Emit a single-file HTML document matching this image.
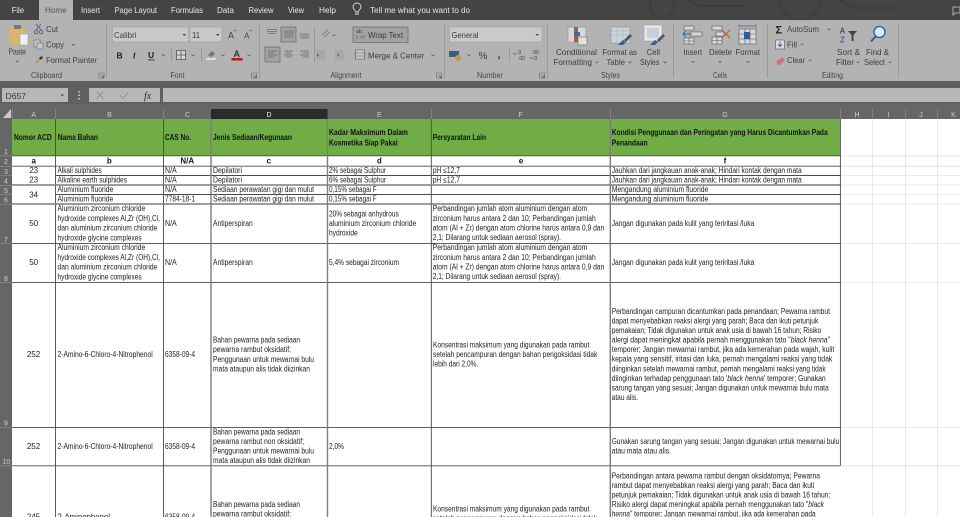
<!DOCTYPE html>
<html><head><meta charset="utf-8"><style>
html,body{margin:0;padding:0;width:960px;height:517px;overflow:hidden;background:#fff}
svg{display:block;filter:blur(.3px)}
text{font-family:"Liberation Sans",sans-serif}
.t{font-size:8.5px;fill:#e8e8e8}
.r{font-size:8.5px;fill:#3c3c3c}
.l{font-size:8px;fill:#444}
.c{font-size:8px;fill:#222}
.b{font-size:8px;fill:#111;font-weight:bold}
.h{font-size:7px;fill:#cfcfcf}
.ch{fill:none;stroke:#555;stroke-width:.7}
</style></head><body>
<svg width="960" height="517" viewBox="0 0 960 517" xmlns="http://www.w3.org/2000/svg">
<defs><path id="cv" class="ch" d="M-1.5 -1 L0 .5 L1.5 -1"/>
<g id="lau"><path d="M-2.5 -2.5h5v5h-5z" fill="none" stroke="#666" stroke-width=".6"/><path d="M-.5 -.5l3 3M2.5 .5v2h-2" fill="none" stroke="#555" stroke-width=".6"/></g></defs>

<!-- title bar -->
<rect width="960" height="20" fill="#444"/>
<g fill="none" stroke="#3c3c3c" stroke-width="1.5"><circle cx="662" cy="6" r="12"/><path d="M690 0l8 6h48M780 0a16 16 0 0 0 40 0M840 0l12 8h50"/></g>
<path d="M953 7h7v6h-5l-2 2z" fill="none" stroke="#ccc" stroke-width=".8"/>
<rect x="39" y="0" width="34" height="20" fill="#b3b3b3"/>
<text class="t" x="11.7" y="13" textLength="12.3" lengthAdjust="spacingAndGlyphs">File</text>
<text class="r" x="45" y="13" textLength="21.7" lengthAdjust="spacingAndGlyphs" style="fill:#555">Home</text>
<text class="t" x="81" y="13" textLength="19" lengthAdjust="spacingAndGlyphs">Insert</text>
<text class="t" x="114.5" y="13" textLength="42.5" lengthAdjust="spacingAndGlyphs">Page Layout</text>
<text class="t" x="171" y="13" textLength="32" lengthAdjust="spacingAndGlyphs">Formulas</text>
<text class="t" x="217" y="13" textLength="17" lengthAdjust="spacingAndGlyphs">Data</text>
<text class="t" x="248.5" y="13" textLength="25" lengthAdjust="spacingAndGlyphs">Review</text>
<text class="t" x="288" y="13" textLength="16" lengthAdjust="spacingAndGlyphs">View</text>
<text class="t" x="319" y="13" textLength="17" lengthAdjust="spacingAndGlyphs">Help</text>
<path d="M355 14h4M355.5 12c0-2-2.500-3-2.500-5a4 4 0 0 1 8 0c0 2-2.500 3-2.500 5z" fill="none" stroke="#ddd" stroke-width=".9"/>
<text class="t" x="370" y="13" textLength="100" lengthAdjust="spacingAndGlyphs">Tell me what you want to do</text>

<!-- ribbon -->
<rect y="20" width="960" height="61" fill="#b3b3b3"/>
<g fill="#9a9a9a"><rect x="106" y="23" width="1" height="55"/><rect x="259" y="23" width="1" height="55"/><rect x="444" y="23" width="1" height="55"/><rect x="547" y="23" width="1" height="55"/><rect x="673" y="23" width="1" height="55"/><rect x="767" y="23" width="1" height="55"/><rect x="898" y="23" width="1" height="55"/><rect x="314" y="27" width="1" height="35"/><rect x="171" y="48" width="1" height="14"/><rect x="201" y="48" width="1" height="14"/><rect x="509" y="48" width="1" height="14"/></g>

<!-- clipboard -->
<rect x="10" y="27" width="15" height="18" rx="1" fill="#d9b56c"/><rect x="14" y="25" width="7" height="4" fill="#777"/><rect x="20" y="34" width="8" height="11" fill="#eee" stroke="#888" stroke-width=".4"/>
<text class="r" x="8.500" y="54.500" textLength="17.500" lengthAdjust="spacingAndGlyphs">Paste</text><use href="#cv" x="17.500" y="61.500"/>
<g fill="none" stroke="#46597a" stroke-width=".8"><circle cx="36" cy="32" r="1.800"/><circle cx="41" cy="32" r="1.800"/><path d="M36 30l5-6M41 30l-5-6"/></g>
<text class="r" x="46" y="32" textLength="12" lengthAdjust="spacingAndGlyphs">Cut</text>
<rect x="34" y="40" width="6" height="7" fill="#c8c8c8" stroke="#667" stroke-width=".6"/><rect x="37" y="43" width="6" height="6" fill="#c8c8c8" stroke="#667" stroke-width=".6"/>
<text class="r" x="46" y="47.500" textLength="18" lengthAdjust="spacingAndGlyphs">Copy</text><use href="#cv" x="73.500" y="45"/>
<path d="M35 62l3-3 2 2-3 3z" fill="#c69a4e"/><path d="M39 58l3-2 1 2-3 2z" fill="#333"/>
<text class="r" x="46" y="63" textLength="51" lengthAdjust="spacingAndGlyphs">Format Painter</text>
<text class="l" x="31" y="78" textLength="31" lengthAdjust="spacingAndGlyphs">Clipboard</text><use href="#lau" x="101.500" y="75.500"/>

<!-- font -->
<rect x="112.500" y="27" width="76" height="15" fill="#c8c8c8" stroke="#a0a0a0" stroke-width=".6"/>
<rect x="190" y="27" width="32" height="15" fill="#c8c8c8" stroke="#a0a0a0" stroke-width=".6"/>
<text class="r" x="114" y="38" textLength="22.500" lengthAdjust="spacingAndGlyphs">Calibri</text>
<text class="r" x="192" y="38" textLength="8" lengthAdjust="spacingAndGlyphs">11</text>
<path d="M182.500 34h3.500l-1.750 2zM216 34h3.500l-1.750 2z" fill="#444"/>
<text class="r" x="228" y="38.500" style="font-size:9px">A</text><text class="r" x="244" y="38.500" style="font-size:8px">A</text>
<path d="M233.500 31l1.500-1 1.500 1M249 30l1.500 1 1.500-1" fill="none" stroke="#3f5f8f" stroke-width=".6"/>
<text class="r" x="116.500" y="58.500" style="font-weight:bold;font-size:8.500px;fill:#222">B</text>
<text class="r" x="133" y="58.500" style="font-weight:bold;font-style:italic;font-size:8.500px;fill:#222">I</text>
<text class="r" x="148" y="58" style="font-weight:bold;font-size:8.500px;fill:#222">U</text><rect x="148" y="59.500" width="6.500" height=".8" fill="#222"/>
<use href="#cv" x="163.500" y="55.500"/>
<path d="M176.500 50.500h9v9h-9zM181 50.500v9M176.500 55h9" fill="#d6d6d6" stroke="#555" stroke-width=".8"/><use href="#cv" x="193" y="55.500"/>
<path d="M208 55l4-4 3 3-4 3z" fill="#777"/><rect x="206" y="58" width="10" height="2" fill="#ddd"/><use href="#cv" x="223" y="55.500"/>
<text class="r" x="233.500" y="57" style="font-size:9px;font-weight:bold;fill:#333">A</text><rect x="231.500" y="58" width="11" height="2.500" fill="#c0141c"/><use href="#cv" x="249" y="55.500"/>
<text class="l" x="170.500" y="78" textLength="14" lengthAdjust="spacingAndGlyphs">Font</text><use href="#lau" x="254" y="75.500"/>

<!-- alignment -->
<rect x="281" y="27" width="15" height="15" fill="#a2a2a2" stroke="#6f6f6f" stroke-width=".8"/>
<rect x="265" y="47" width="15" height="15" fill="#a2a2a2" stroke="#6f6f6f" stroke-width=".8"/>
<g stroke="#6a6a6a" stroke-width=".8" fill="none"><path d="M267 29.500h10M267 31.500h10M268 33.500h8"/><path d="M284 31h10M284 33h10M285 35h8M284 37h10"/><path d="M299.500 34h10M299.500 36h10M300.500 38h8"/><path d="M268 51h9M268 53h6M268 55h9M268 57h6"/><path d="M284 51h9M285.500 53h6M284 55h9M285.500 57h6"/><path d="M300 51h9M303 53h6M300 55h9M303 57h6"/></g>
<path d="M322 35l6-5M324 37l6-5" stroke="#777" stroke-width=".9" fill="none"/><use href="#cv" x="334" y="35.500"/>
<rect x="316" y="50" width="9" height="10" fill="#a8a8a8"/><path d="M319 55l-2-2v4z" fill="#3f6a9c"/>
<rect x="335" y="50" width="9" height="10" fill="#a8a8a8"/><path d="M337 55l2-2v4z" fill="#3f6a9c"/>
<rect x="353" y="27" width="55" height="15.500" fill="#a2a2a2" stroke="#6f6f6f" stroke-width=".8"/>
<text class="r" x="356" y="33" style="font-size:5.500px;fill:#444">ab</text><text class="r" x="356" y="39" style="font-size:5.500px;fill:#3f6a9c">c</text><path d="M360 37h4v-2" stroke="#3f6a9c" fill="none" stroke-width=".7"/>
<text class="r" x="368" y="38" textLength="35" lengthAdjust="spacingAndGlyphs">Wrap Text</text>
<rect x="355.500" y="50" width="9" height="9" fill="#ccc" stroke="#666" stroke-width=".7"/><path d="M355.500 53h9M355.500 56h9" stroke="#446" stroke-width=".6"/>
<text class="r" x="368" y="58.500" textLength="56" lengthAdjust="spacingAndGlyphs">Merge &amp; Center</text><use href="#cv" x="433" y="55.500"/>
<text class="l" x="330.500" y="78" textLength="31" lengthAdjust="spacingAndGlyphs">Alignment</text><use href="#lau" x="439" y="75.500"/>

<!-- number -->
<rect x="449.500" y="27" width="92.500" height="15" fill="#cacaca" stroke="#a0a0a0" stroke-width=".6"/>
<text class="r" x="451.500" y="38" textLength="27" lengthAdjust="spacingAndGlyphs">General</text><path d="M535.500 34h3.500l-1.750 2z" fill="#444"/>
<rect x="449" y="51" width="10" height="6" fill="#3e5c7e"/><circle cx="458" cy="58" r="3" fill="#c29b52"/><use href="#cv" x="469" y="55.500"/>
<text class="r" x="478.500" y="59" style="font-size:10px">%</text>
<text class="r" x="497.500" y="58" style="font-size:10px;font-weight:bold;fill:#222">,</text>
<text class="r" x="517" y="54" style="font-size:5px">.0</text><text class="r" x="518" y="60" style="font-size:5px">.00</text><path d="M513 54h3" stroke="#3f6a9c" stroke-width=".9"/>
<text class="r" x="532" y="54" style="font-size:5px">.00</text><text class="r" x="533" y="60" style="font-size:5px">.0</text><path d="M530 58h3" stroke="#3f6a9c" stroke-width=".9"/>
<text class="l" x="477" y="78" textLength="26" lengthAdjust="spacingAndGlyphs">Number</text><use href="#lau" x="542" y="75.500"/>

<!-- styles -->
<rect x="568" y="27" width="18" height="15" fill="#d8d8d8" stroke="#888" stroke-width=".5"/><rect x="574" y="27" width="4" height="15" fill="#a8584f"/><rect x="574" y="32" width="6" height="4" fill="#3f6a9c"/><rect x="578" y="37" width="9" height="8" fill="#e2e2e2" stroke="#666" stroke-width=".6"/>
<text class="r" x="556" y="55" textLength="41" lengthAdjust="spacingAndGlyphs">Conditional</text>
<text class="r" x="553.500" y="65" textLength="38.500" lengthAdjust="spacingAndGlyphs">Formatting</text><use href="#cv" x="597" y="62.500"/>
<rect x="611" y="27" width="19" height="16" fill="#c9d3de" stroke="#888" stroke-width=".5"/><path d="M611 31h19M611 35h19M617 27v16M623 27v16" stroke="#9aa" stroke-width=".4"/><path d="M618 45l5-5 3 2-3 3z" fill="#2f5d94"/><path d="M624 40l6-6 2 2-6 6z" fill="#555"/>
<text class="r" x="602.500" y="55" textLength="34.500" lengthAdjust="spacingAndGlyphs">Format as</text>
<text class="r" x="606.500" y="65" textLength="18.500" lengthAdjust="spacingAndGlyphs">Table</text><use href="#cv" x="630" y="62.500"/>
<rect x="644" y="25" width="18" height="16" fill="#e6e6e6" stroke="#999" stroke-width=".5"/><rect x="647" y="28" width="12" height="10" fill="#c4d0dd"/><path d="M650 45l5-5 3 2-3 3z" fill="#2f5d94"/><path d="M657 40l6-6 2 2-6 6z" fill="#555"/>
<text class="r" x="646.700" y="55" textLength="13.300" lengthAdjust="spacingAndGlyphs">Cell</text>
<text class="r" x="640" y="65" textLength="19.500" lengthAdjust="spacingAndGlyphs">Styles</text><use href="#cv" x="665" y="62.500"/>
<text class="l" x="601" y="78" textLength="19" lengthAdjust="spacingAndGlyphs">Styles</text>

<!-- cells -->
<g fill="#d9d9d9" stroke="#555" stroke-width=".6"><rect x="684" y="26" width="10" height="4"/><rect x="690" y="32" width="12" height="4"/><rect x="684" y="38" width="10" height="6"/><path d="M689 38v6M684 41h10"/>
<rect x="712" y="26" width="10" height="4"/><rect x="716" y="32" width="8" height="4"/><rect x="712" y="37" width="10" height="7"/><path d="M717 37v7M712 40.500h10"/>
<rect x="739" y="29" width="17" height="15"/><path d="M745 29v15M750 29v15M739 34h17M739 39h17"/></g>
<path d="M683 34h9M686 31l-3 3 3 3" fill="none" stroke="#2f6aa8" stroke-width="1"/>
<path d="M722 30l8 8M730 30l-8 8" stroke="#c05a30" stroke-width="1.100"/>
<rect x="744" y="32" width="6" height="7" fill="#2f5d94"/><path d="M739 26h17M739 24.500v3M756 24.500v3" stroke="#3f6a9c" stroke-width=".8" fill="none"/>
<text class="r" x="683.500" y="55" textLength="18.500" lengthAdjust="spacingAndGlyphs">Insert</text>
<text class="r" x="709" y="55" textLength="23" lengthAdjust="spacingAndGlyphs">Delete</text>
<text class="r" x="735.500" y="55" textLength="24.500" lengthAdjust="spacingAndGlyphs">Format</text>
<use href="#cv" x="693" y="62"/><use href="#cv" x="720" y="62"/><use href="#cv" x="748" y="62"/>
<text class="l" x="713" y="78" textLength="14" lengthAdjust="spacingAndGlyphs">Cells</text>

<!-- editing -->
<text x="775.500" y="33.500" style="font-size:11px;font-weight:bold;fill:#222">Σ</text>
<text class="r" x="787" y="32" textLength="32" lengthAdjust="spacingAndGlyphs">AutoSum</text><use href="#cv" x="829" y="29.500"/>
<rect x="775.500" y="40" width="9" height="9" fill="#ddd" stroke="#666" stroke-width=".7"/><path d="M780 41.500v5M778 44.500l2 2 2-2" stroke="#2f5d94" fill="none" stroke-width=".9"/>
<text class="r" x="787" y="47.500" textLength="10" lengthAdjust="spacingAndGlyphs">Fill</text><use href="#cv" x="802" y="44.500"/>
<path d="M776 62l6-5 3 3-5 5h-2z" fill="#c9747d"/>
<text class="r" x="787" y="63" textLength="18" lengthAdjust="spacingAndGlyphs">Clear</text><use href="#cv" x="810" y="60.500"/>
<text x="839.500" y="33.500" style="font-size:8px;font-weight:bold;fill:#2f5d94">A</text><text x="840" y="42.500" style="font-size:8px;font-weight:bold;fill:#7c4fa0">Z</text>
<path d="M848 31h9l-3.500 4v6h-2v-6z" fill="#444"/>
<circle cx="879.500" cy="32" r="5.500" fill="#dfe6ee" stroke="#2f5d94" stroke-width="1.300"/><path d="M875.500 36.500l-4.500 5" stroke="#2f5d94" stroke-width="2"/>
<text class="r" x="837" y="55" textLength="23" lengthAdjust="spacingAndGlyphs">Sort &amp;</text>
<text class="r" x="836" y="65" textLength="18" lengthAdjust="spacingAndGlyphs">Filter</text><use href="#cv" x="858" y="62.500"/>
<text class="r" x="866" y="55" textLength="23" lengthAdjust="spacingAndGlyphs">Find &amp;</text>
<text class="r" x="864" y="65" textLength="21" lengthAdjust="spacingAndGlyphs">Select</text><use href="#cv" x="890" y="62.500"/>
<text class="l" x="822" y="78" textLength="21" lengthAdjust="spacingAndGlyphs">Editing</text>

<!-- formula bar -->
<rect y="81" width="960" height="28" fill="#5f5f5f"/>
<rect x="2" y="88" width="66" height="14" fill="#b8b8b8"/>
<text class="r" x="5.500" y="99" textLength="20.500" lengthAdjust="spacingAndGlyphs">D657</text><path d="M60.500 94.500h3.500l-1.750 2z" fill="#444"/>
<g fill="#bbb"><rect x="78" y="91" width="2" height="1.500"/><rect x="78" y="94.500" width="2" height="1.500"/><rect x="78" y="98" width="2" height="1.500"/></g>
<rect x="89" y="88" width="71" height="14" fill="#b8b8b8"/>
<path d="M96.500 91.500l7 7M103.500 91.500l-7 7" stroke="#8f8f8f" stroke-width=".9"/>
<path d="M120 95.500l3 3 5-6" stroke="#8f8f8f" stroke-width=".9" fill="none"/>
<text x="144" y="99" style="font-family:'Liberation Serif',serif;font-style:italic;font-size:10px;fill:#333">fx</text>
<rect x="163" y="88" width="797" height="14" fill="#b8b8b8"/>

<!-- headers -->
<rect y="104" width="960" height="15" fill="#666"/>
<rect y="119" width="12" height="398" fill="#666"/>
<rect x="211" y="109" width="116.500" height="10" fill="#2a2a2a"/>
<path d="M11 109v9h-8z" fill="#ccc"/>
<g fill="#8a8a8a"><rect x="12" y="109" width=".8" height="10"/><rect x="55" y="109" width=".8" height="10"/><rect x="163" y="109" width=".8" height="10"/><rect x="431" y="109" width=".8" height="10"/><rect x="610" y="109" width=".8" height="10"/><rect x="840" y="109" width=".8" height="10"/><rect x="872" y="109" width=".8" height="10"/><rect x="905" y="109" width=".8" height="10"/><rect x="937" y="109" width=".8" height="10"/></g>
<g text-anchor="middle"><text class="h" x="33.700" y="117">A</text><text class="h" x="109.500" y="117">B</text><text class="h" x="187.500" y="117">C</text><text class="h" x="269" y="117" style="fill:#eee">D</text><text class="h" x="379.300" y="117">E</text><text class="h" x="520.500" y="117">F</text><text class="h" x="725" y="117">G</text><text class="h" x="857" y="117">H</text><text class="h" x="888.500" y="117">I</text><text class="h" x="921" y="117">J</text><text class="h" x="953.500" y="117">K</text></g>
<g><text class="h" x="4" y="154">1</text><text class="h" x="4" y="164">2</text><text class="h" x="4" y="174">3</text><text class="h" x="4" y="183.500">4</text><text class="h" x="4" y="193">5</text><text class="h" x="4" y="202.500">6</text><text class="h" x="4" y="242">7</text><text class="h" x="4" y="281">8</text><text class="h" x="4" y="425.500">9</text><text class="h" x="2.500" y="464">10</text></g>
<g fill="#8a8a8a"><rect y="155.500" width="12" height=".8"/><rect y="166" width="12" height=".8"/><rect y="175" width="12" height=".8"/><rect y="185" width="12" height=".8"/><rect y="194" width="12" height=".8"/><rect y="204" width="12" height=".8"/><rect y="243" width="12" height=".8"/><rect y="282" width="12" height=".8"/><rect y="427" width="12" height=".8"/><rect y="465.500" width="12" height=".8"/></g>

<!-- sheet -->
<rect x="12" y="119" width="828" height="36.700" fill="#70ad47"/>
<g stroke="#e4e4e4" stroke-width=".8"><path d="M872.400 119V517M905.400 119V517M937.400 119V517M840 155.800H960M840 166.300H960M840 175.600H960M840 185H960M840 194.500H960M840 204H960M840 243.500H960M840 282.500H960M840 427.500H960M840 465.800H960"/></g>
<g stroke="#4a4a4a" stroke-width=".9"><path d="M55.500 119V517M163.500 119V517M431.300 119V517M840.400 119V465.800M12 155.800H840M12 166.200H840M55.500 175.500H840M55.500 194.500H840M12 243.400H840M12 282.400H840M12 427.400H840M12 465.800H840"/></g>
<g stroke="#7d7d7d" stroke-width="1.400"><path d="M211 119V517M327.500 119V517M610.300 119V517M12 185H840M12 204H840"/></g>

<!-- row1 -->
<text class="b" x="14" y="140" textLength="37.700" lengthAdjust="spacingAndGlyphs">Nomor ACD</text>
<text class="b" x="57.700" y="140" textLength="40.300" lengthAdjust="spacingAndGlyphs">Nama Bahan</text>
<text class="b" x="165" y="140" textLength="26" lengthAdjust="spacingAndGlyphs">CAS No.</text>
<text class="b" x="213" y="140" textLength="79" lengthAdjust="spacingAndGlyphs">Jenis Sediaan/Kegunaan</text>
<text class="b" x="329" y="135" textLength="79" lengthAdjust="spacingAndGlyphs">Kadar Maksimum Dalam</text>
<text class="b" x="329" y="145.500" textLength="68.700" lengthAdjust="spacingAndGlyphs">Kosmetika Siap Pakai</text>
<text class="b" x="432.700" y="140" textLength="53.300" lengthAdjust="spacingAndGlyphs">Persyaratan Lain</text>
<text class="b" x="611.700" y="135" textLength="216" lengthAdjust="spacingAndGlyphs">Kondisi Penggunaan dan Peringatan yang Harus Dicantumkan Pada</text>
<text class="b" x="611.700" y="145.500" textLength="36" lengthAdjust="spacingAndGlyphs">Penandaan</text>
<!-- row2 -->
<g text-anchor="middle"><text class="b" x="33.700" y="163.500">a</text><text class="b" x="109.300" y="163.500">b</text><text class="b" x="187.300" y="163.500">N/A</text><text class="b" x="268.700" y="163.500">c</text><text class="b" x="379.300" y="163.500">d</text><text class="b" x="521" y="163.500">e</text><text class="b" x="725" y="163.500">f</text>
<text class="c" x="33.700" y="173">23</text><text class="c" x="33.700" y="182.500">23</text><text class="c" x="33.700" y="197.500">34</text><text class="c" x="33.700" y="226">50</text><text class="c" x="33.700" y="265">50</text><text class="c" x="33.500" y="357">252</text><text class="c" x="33.500" y="449">252</text><text class="c" x="33.500" y="519.500">245</text></g>
<!-- row3-6 -->
<text class="c" x="57.500" y="173" textLength="44.200" lengthAdjust="spacingAndGlyphs">Alkali sulphides</text>
<text class="c" x="165" y="173" textLength="11.700" lengthAdjust="spacingAndGlyphs">N/A</text>
<text class="c" x="213" y="173" textLength="29" lengthAdjust="spacingAndGlyphs">Depilatori</text>
<text class="c" x="329" y="173" textLength="57" lengthAdjust="spacingAndGlyphs">2% sebagai Sulphur</text>
<text class="c" x="432.700" y="173" textLength="27.300" lengthAdjust="spacingAndGlyphs">pH ≤12,7</text>
<text class="c" x="611.700" y="173" textLength="190" lengthAdjust="spacingAndGlyphs">Jauhkan dari jangkauan anak-anak; Hindari kontak dengan mata</text>
<text class="c" x="57.500" y="182.500" textLength="69.500" lengthAdjust="spacingAndGlyphs">Alkaline earth sulphides</text>
<text class="c" x="165" y="182.500" textLength="11.700" lengthAdjust="spacingAndGlyphs">N/A</text>
<text class="c" x="213" y="182.500" textLength="29" lengthAdjust="spacingAndGlyphs">Depilatori</text>
<text class="c" x="329" y="182.500" textLength="57" lengthAdjust="spacingAndGlyphs">6% sebagai Sulphur</text>
<text class="c" x="432.700" y="182.500" textLength="27.300" lengthAdjust="spacingAndGlyphs">pH ≤12,7</text>
<text class="c" x="611.700" y="182.500" textLength="190" lengthAdjust="spacingAndGlyphs">Jauhkan dari jangkauan anak-anak; Hindari kontak dengan mata</text>
<text class="c" x="57.500" y="192" textLength="55.800" lengthAdjust="spacingAndGlyphs">Aluminium fluoride</text>
<text class="c" x="165" y="192" textLength="11.700" lengthAdjust="spacingAndGlyphs">N/A</text>
<text class="c" x="213" y="192" textLength="101" lengthAdjust="spacingAndGlyphs">Sediaan perawatan gigi dan mulut</text>
<text class="c" x="329" y="192" textLength="47.700" lengthAdjust="spacingAndGlyphs">0,15% sebagai F</text>
<text class="c" x="611.700" y="192" textLength="96.600" lengthAdjust="spacingAndGlyphs">Mengandung aluminium fluoride</text>
<text class="c" x="57.500" y="201.500" textLength="55.800" lengthAdjust="spacingAndGlyphs">Aluminium fluoride</text>
<text class="c" x="165" y="201.500" textLength="30" lengthAdjust="spacingAndGlyphs">7784-18-1</text>
<text class="c" x="213" y="201.500" textLength="101" lengthAdjust="spacingAndGlyphs">Sediaan perawatan gigi dan mulut</text>
<text class="c" x="329" y="201.500" textLength="47.700" lengthAdjust="spacingAndGlyphs">0,15% sebagai F</text>
<text class="c" x="611.700" y="201.500" textLength="96.600" lengthAdjust="spacingAndGlyphs">Mengandung aluminium fluoride</text>
<!-- row7 -->
<text class="c" x="57.500" y="211" textLength="87.800" lengthAdjust="spacingAndGlyphs">Aluminium zirconium chloride</text>
<text class="c" x="57.500" y="221" textLength="102.500" lengthAdjust="spacingAndGlyphs">hydroxide complexes Al,Zr (OH),Cl,</text>
<text class="c" x="57.500" y="230.500" textLength="99.800" lengthAdjust="spacingAndGlyphs">dan aluminium zirconium chloride</text>
<text class="c" x="57.500" y="240.300" textLength="84.200" lengthAdjust="spacingAndGlyphs">hydroxide glycine complexes</text>
<text class="c" x="165" y="226" textLength="11.700" lengthAdjust="spacingAndGlyphs">N/A</text>
<text class="c" x="213" y="226" textLength="39.700" lengthAdjust="spacingAndGlyphs">Antiperspiran</text>
<text class="c" x="329" y="216.500" textLength="69.700" lengthAdjust="spacingAndGlyphs">20% sebagai anhydrous</text>
<text class="c" x="329" y="226" textLength="87.300" lengthAdjust="spacingAndGlyphs">aluminium zirconium chloride</text>
<text class="c" x="329" y="235.500" textLength="28.700" lengthAdjust="spacingAndGlyphs">hydroxide</text>
<text class="c" x="432.700" y="211" textLength="154.600" lengthAdjust="spacingAndGlyphs">Perbandingan jumlah atom aluminium dengan atom</text>
<text class="c" x="432.700" y="221" textLength="163" lengthAdjust="spacingAndGlyphs">zirconium harus antara 2 dan 10; Perbandingan jumlah</text>
<text class="c" x="432.700" y="230.500" textLength="171.600" lengthAdjust="spacingAndGlyphs">atom (Al + Zr) dengan atom chlorine harus antara 0,9 dan</text>
<text class="c" x="432.700" y="240" textLength="128.300" lengthAdjust="spacingAndGlyphs">2,1; Dilarang untuk sediaan aerosol (spray).</text>
<text class="c" x="611.700" y="226" textLength="142.600" lengthAdjust="spacingAndGlyphs">Jangan digunakan pada kulit yang teriritasi /luka</text>
<!-- row8 -->
<text class="c" x="57.500" y="250" textLength="87.800" lengthAdjust="spacingAndGlyphs">Aluminium zirconium chloride</text>
<text class="c" x="57.500" y="260" textLength="102.500" lengthAdjust="spacingAndGlyphs">hydroxide complexes Al,Zr (OH),Cl,</text>
<text class="c" x="57.500" y="269.500" textLength="99.800" lengthAdjust="spacingAndGlyphs">dan aluminium zirconium chloride</text>
<text class="c" x="57.500" y="279.300" textLength="84.200" lengthAdjust="spacingAndGlyphs">hydroxide glycine complexes</text>
<text class="c" x="165" y="265" textLength="11.700" lengthAdjust="spacingAndGlyphs">N/A</text>
<text class="c" x="213" y="265" textLength="39.700" lengthAdjust="spacingAndGlyphs">Antiperspiran</text>
<text class="c" x="329" y="265" textLength="70" lengthAdjust="spacingAndGlyphs">5,4% sebagai zirconium</text>
<text class="c" x="432.700" y="250" textLength="154.600" lengthAdjust="spacingAndGlyphs">Perbandingan jumlah atom aluminium dengan atom</text>
<text class="c" x="432.700" y="260" textLength="163" lengthAdjust="spacingAndGlyphs">zirconium harus antara 2 dan 10; Perbandingan jumlah</text>
<text class="c" x="432.700" y="269.500" textLength="171.600" lengthAdjust="spacingAndGlyphs">atom (Al + Zr) dengan atom chlorine harus antara 0,9 dan</text>
<text class="c" x="432.700" y="279" textLength="128.300" lengthAdjust="spacingAndGlyphs">2,1; Dilarang untuk sediaan aerosol (spray).</text>
<text class="c" x="611.700" y="265" textLength="142.600" lengthAdjust="spacingAndGlyphs">Jangan digunakan pada kulit yang teriritasi /luka</text>
<!-- row9 -->
<text class="c" x="57.500" y="357" textLength="95.200" lengthAdjust="spacingAndGlyphs">2-Amino-6-Chloro-4-Nitrophenol</text>
<text class="c" x="165" y="357" textLength="30" lengthAdjust="spacingAndGlyphs">6358-09-4</text>
<text class="c" x="213" y="342.500" textLength="87" lengthAdjust="spacingAndGlyphs">Bahan pewarna pada sediaan</text>
<text class="c" x="213" y="352" textLength="78" lengthAdjust="spacingAndGlyphs">pewarna rambut oksidatif;</text>
<text class="c" x="213" y="362" textLength="101" lengthAdjust="spacingAndGlyphs">Penggunaan untuk mewarnai bulu</text>
<text class="c" x="213" y="371.500" textLength="97" lengthAdjust="spacingAndGlyphs">mata ataupun alis tidak diizinkan</text>
<text class="c" x="433" y="347.500" textLength="156.300" lengthAdjust="spacingAndGlyphs">Konsentrasi maksimum yang digunakan pada rambut</text>
<text class="c" x="433" y="357.200" textLength="164.300" lengthAdjust="spacingAndGlyphs">setelah pencampuran dengan bahan pengoksidasi tidak</text>
<text class="c" x="433" y="366.700" textLength="45.300" lengthAdjust="spacingAndGlyphs">lebih dari 2,0%.</text>
<text class="c" x="611.700" y="314" textLength="218.300" lengthAdjust="spacingAndGlyphs">Perbandingan campuran dicantumkan pada penandaan; Pewarna rambut</text>
<text class="c" x="611.700" y="323.500" textLength="206.600" lengthAdjust="spacingAndGlyphs">dapat menyebabkan reaksi alergi yang parah; Baca dan ikuti petunjuk</text>
<text class="c" x="611.700" y="333" textLength="209.600" lengthAdjust="spacingAndGlyphs">pemakaian; Tidak digunakan untuk anak usia di bawah 16 tahun; Risiko</text>
<text class="c" x="611.700" y="342.600" textLength="218.300" lengthAdjust="spacingAndGlyphs">alergi dapat meningkat apabila pernah menggunakan tato "<tspan font-style="italic">black henna</tspan>"</text>
<text class="c" x="611.700" y="352.200" textLength="222.600" lengthAdjust="spacingAndGlyphs">temporer; Jangan mewarnai rambut, jika ada kemerahan pada wajah, kulit</text>
<text class="c" x="611.700" y="361.700" textLength="220.600" lengthAdjust="spacingAndGlyphs">kepala yang sensitif, iritasi dan luka, pernah mengalami reaksi yang tidak</text>
<text class="c" x="611.700" y="371.300" textLength="214" lengthAdjust="spacingAndGlyphs">diinginkan setelah mewarnai rambut, pernah mengalami reaksi yang tidak</text>
<text class="c" x="611.700" y="380.800" textLength="214" lengthAdjust="spacingAndGlyphs">diinginkan terhadap penggunaan tato '<tspan font-style="italic">black henna</tspan>' temporer; Gunakan</text>
<text class="c" x="611.700" y="390.400" textLength="217" lengthAdjust="spacingAndGlyphs">sarung tangan yang sesuai; Jangan digunakan untuk mewarnai bulu mata</text>
<text class="c" x="611.700" y="400" textLength="26.300" lengthAdjust="spacingAndGlyphs">atau alis.</text>
<!-- row10 -->
<text class="c" x="57.500" y="449" textLength="95.200" lengthAdjust="spacingAndGlyphs">2-Amino-6-Chloro-4-Nitrophenol</text>
<text class="c" x="165" y="449" textLength="30" lengthAdjust="spacingAndGlyphs">6358-09-4</text>
<text class="c" x="213" y="434.500" textLength="87" lengthAdjust="spacingAndGlyphs">Bahan pewarna pada sediaan</text>
<text class="c" x="213" y="444" textLength="91" lengthAdjust="spacingAndGlyphs">pewarna rambut non oksidatif;</text>
<text class="c" x="213" y="453.500" textLength="101" lengthAdjust="spacingAndGlyphs">Penggunaan untuk mewarnai bulu</text>
<text class="c" x="213" y="463" textLength="97" lengthAdjust="spacingAndGlyphs">mata ataupun alis tidak diizinkan</text>
<text class="c" x="329" y="449" textLength="15" lengthAdjust="spacingAndGlyphs">2,0%</text>
<text class="c" x="611.700" y="444" textLength="227.600" lengthAdjust="spacingAndGlyphs">Gunakan sarung tangan yang sesuai; Jangan digunakan untuk mewarnai bulu</text>
<text class="c" x="611.700" y="453.500" textLength="59.300" lengthAdjust="spacingAndGlyphs">atau mata atau alis.</text>
<!-- row11 -->
<text class="c" x="57.500" y="519.500" textLength="52.500" lengthAdjust="spacingAndGlyphs">2-Aminophenol</text>
<text class="c" x="165" y="519.500" textLength="30" lengthAdjust="spacingAndGlyphs">6358-09-4</text>
<text class="c" x="213" y="507" textLength="87" lengthAdjust="spacingAndGlyphs">Bahan pewarna pada sediaan</text>
<text class="c" x="213" y="516.500" textLength="78" lengthAdjust="spacingAndGlyphs">pewarna rambut oksidatif;</text>
<text class="c" x="433" y="511.700" textLength="156.300" lengthAdjust="spacingAndGlyphs">Konsentrasi maksimum yang digunakan pada rambut</text>
<text class="c" x="433" y="521" textLength="164.300" lengthAdjust="spacingAndGlyphs">setelah pencampuran dengan bahan pengoksidasi tidak</text>
<text class="c" x="611.700" y="478.500" textLength="208.300" lengthAdjust="spacingAndGlyphs">Perbandingan antara pewarna rambut dengan oksidatornya; Pewarna</text>
<text class="c" x="611.700" y="488" textLength="202.600" lengthAdjust="spacingAndGlyphs">rambut dapat menyebabkan reaksi alergi yang parah; Baca dan ikuti</text>
<text class="c" x="611.700" y="497.500" textLength="218.600" lengthAdjust="spacingAndGlyphs">petunjuk pemakaian; Tidak digunakan untuk anak usia di bawah 16 tahun;</text>
<text class="c" x="611.700" y="507" textLength="212.300" lengthAdjust="spacingAndGlyphs">Risiko alergi dapat meningkat apabila pernah menggunakan tato "<tspan font-style="italic">black</tspan></text>
<text class="c" x="611.700" y="516.700" textLength="204" lengthAdjust="spacingAndGlyphs"><tspan font-style="italic">henna</tspan>" temporer; Jangan mewarnai rambut, jika ada kemerahan pada</text>
</svg>
</body></html>
